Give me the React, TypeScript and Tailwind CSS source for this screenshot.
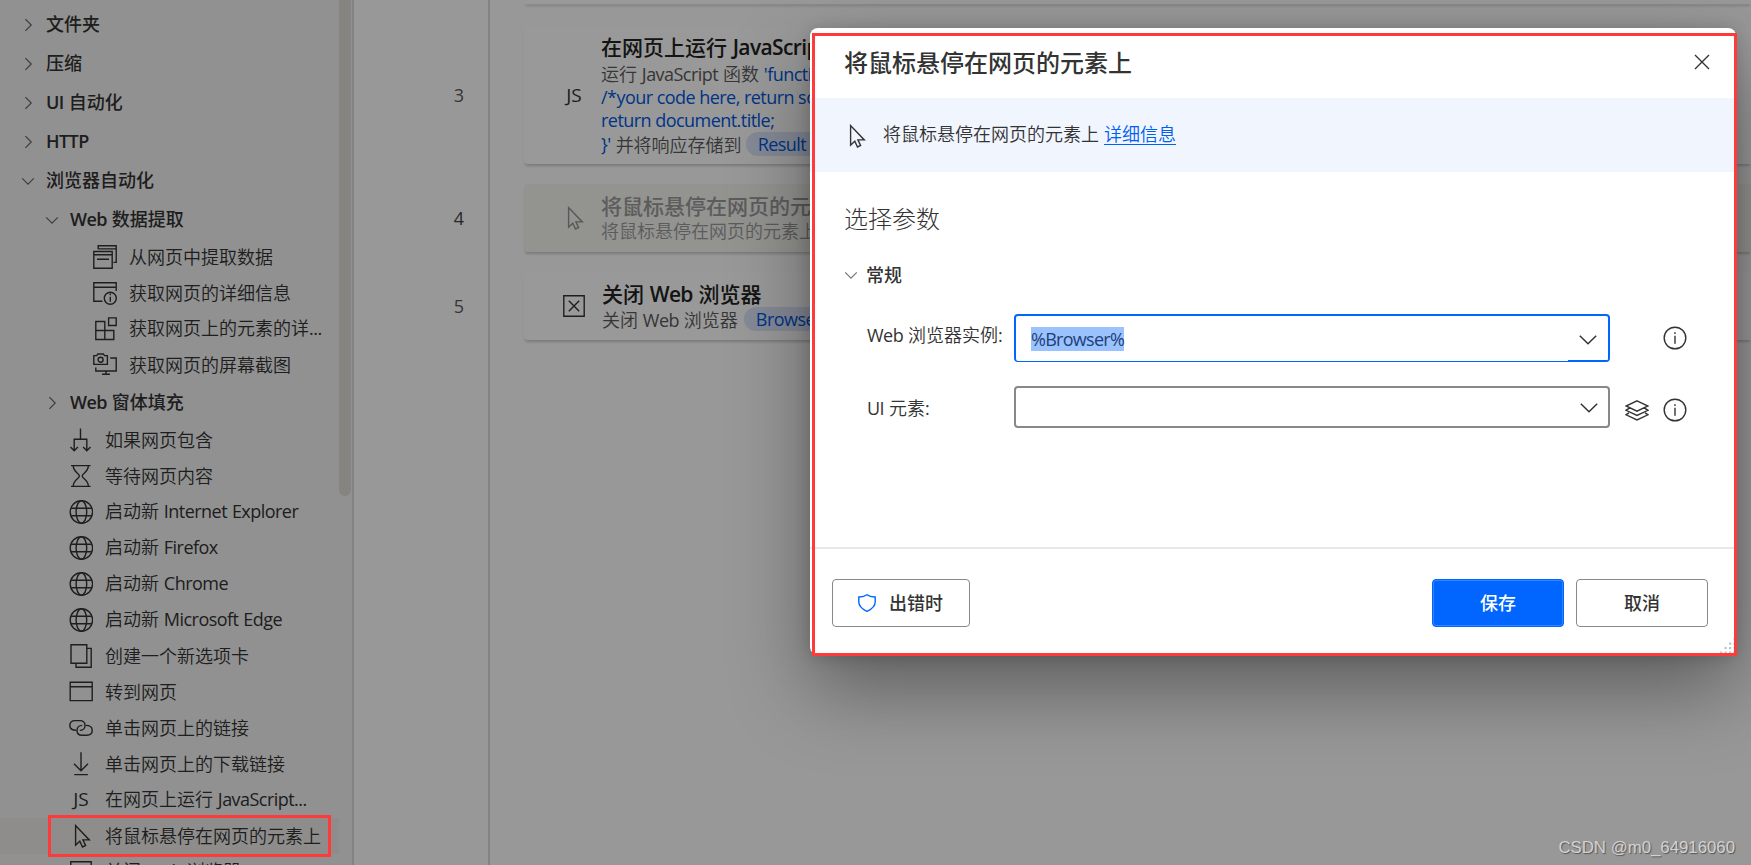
import type { ReactNode } from "react";

// ── Types ──────────────────────────────────────────────────────────────────

interface ActionItem {
    label: string;
    icon: ReactNode;
    selected?: boolean;
}

// ── Text ───────────────────────────────────────────────────────────────────

// Latin runs get their own face and spacing, the rest stays in the CJK face
function Mixed({ text }: { text: string }) {
    const parts = text.split(/([\x20-\x7e]+)/);
    return (
        <>
            {parts.map((part, i) =>
                i % 2 === 1 ? (
                    <span key={i} className="font-['Open_Sans'] font-normal tracking-[-0.03em] [word-spacing:0.04em]">
                        {part}
                    </span>
                ) : (
                    part
                ),
            )}
        </>
    );
}

// ── Icons ──────────────────────────────────────────────────────────────────

function Icon({ children, className = "size-6" }: { children: ReactNode; className?: string }) {
    return (
        <svg
            viewBox="0 0 24 24"
            className={`${className} shrink-0`}
            fill="none"
            stroke="currentColor"
            strokeWidth="1.4"
        >
            {children}
        </svg>
    );
}

function Chevron({ open, className = "text-[#666]" }: { open?: boolean; className?: string }) {
    return (
        <svg viewBox="0 0 14 14" className={`size-3.5 shrink-0 ${className}`} fill="none" stroke="currentColor" strokeWidth="1.2">
            <path d={open ? "M1.2 4.4 7 10.2l5.8-5.8" : "M4.4 1.2 10.2 7l-5.8 5.8"} />
        </svg>
    );
}

function CursorIcon({ className }: { className?: string }) {
    return (
        <Icon className={className}>
            <path d="M6.6 1.6v19.6l4.2-4 2.7 5.8 3.1-1.5-2.7-5.6h6.4z" />
        </Icon>
    );
}

const globe = (
    <Icon>
        <circle cx="12.4" cy="12" r="11.2" />
        <ellipse cx="12.4" cy="12" rx="5.3" ry="11.2" />
        <path d="M2 8.2h20.800M2 15.800h20.800" />
    </Icon>
);

function JsIcon() {
    return (
        <span className="w-6 shrink-0 text-center font-['Open_Sans'] text-[19px] font-normal tracking-[-0.1px]">
            JS
        </span>
    );
}

function CloseBox() {
    return (
        <Icon>
            <path d="M1.8 1.8h20.4v20.4H1.8zM6.8 6.8l10.4 10.4M17.2 6.8 6.8 17.2" />
        </Icon>
    );
}

function Info() {
    return (
        <Icon>
            <circle cx="12" cy="12" r="10.8" />
            <path d="M12 9.8v8M12 6.2v1.8" />
        </Icon>
    );
}

// ── Data ───────────────────────────────────────────────────────────────────

const GROUPS = [
    { label: "文件夹" },
    { label: "压缩" },
    { label: "UI 自动化" },
    { label: "HTTP" },
    { label: "浏览器自动化", open: true },
];

const EXTRACT: ActionItem[] = [
    {
        label: "从网页中提取数据",
        icon: (
            <Icon>
                <path d="M.8 6.5h18.4v16.7H.8zM.8 9.7h18.4M4 14.2h12M5.2 4.2V.8h18v16.6h-2.8M5.2 3.9h18" />
            </Icon>
        ),
    },
    {
        label: "获取网页的详细信息",
        icon: (
            <Icon>
                <path d="M9.5 20.2H.8V1.8h22.4V10M.8 6.2h22.4M17.3 15.8v5M17.3 12.6v1.6" />
                <circle cx="17.3" cy="17.2" r="6" />
            </Icon>
        ),
    },
    {
        label: "获取网页上的元素的详...",
        icon: (
            <Icon>
                <path d="M2.8 4.5h9v18h-9zM2.8 13.5h18v9h-9M15.6.9h7.6v7.6h-7.6z" />
            </Icon>
        ),
    },
    {
        label: "获取网页的屏幕截图",
        icon: (
            <Icon>
                <path d="M.8 2.6h3l1-1.6h5.6l1 1.6h3v8.8H.8zM17.2 5h6v13H2.8v-3.4M13 18v3M9 21.2h8" />
                <circle cx="7.6" cy="6.8" r="2.5" />
            </Icon>
        ),
    },
];

const ACTIONS: ActionItem[] = [
    {
        label: "如果网页包含",
        icon: (
            <Icon>
                <path d="M11.5.5v10.8M5.2 23V11.3h12.6V23M1.5 19l3.7 3.8L8.9 19M14.1 19l3.7 3.8 3.7-3.8" />
            </Icon>
        ),
    },
    {
        label: "等待网页内容",
        icon: (
            <Icon>
                <path d="M2 1.6h19.6M2 22.4h19.6M4.2 1.6c0 6.5 6.2 7.8 6.2 10.4s-6.2 3.900-6.200 10.400M19.400 1.600c0 6.500-6.200 7.800-6.200 10.400s6.200 3.900 6.200 10.400" />
            </Icon>
        ),
    },
    { label: "启动新 Internet Explorer", icon: globe },
    { label: "启动新 Firefox", icon: globe },
    { label: "启动新 Chrome", icon: globe },
    { label: "启动新 Microsoft Edge", icon: globe },
    {
        label: "创建一个新选项卡",
        icon: (
            <Icon>
                <path d="M2 .8h15.8v18.4H2zM17.8 4.4h4.4v18.8H7v-4" />
            </Icon>
        ),
    },
    {
        label: "转到网页",
        icon: (
            <Icon>
                <path d="M1.2 2.2h22v18.4h-22zM1.2 6.8h22" />
            </Icon>
        ),
    },
    {
        label: "单击网页上的链接",
        icon: (
            <Icon>
                <path d="M7.4 14.4C3.6 14.4.8 12.8.8 9.6c0-3 2.2-5 5.4-5h4.6c3.2 0 5.2 2 5.2 4.8 0 3-2.2 5-5.2 5" />
                <path d="M16.6 9.4c3.8 0 6.6 1.6 6.6 4.8 0 3-2.2 5-5.4 5h-4.6C10 19.2 8 17.2 8 14.4c0-3 2.2-5 5.2-5" />
            </Icon>
        ),
    },
    {
        label: "单击网页上的下载链接",
        icon: (
            <Icon>
                <path d="M12 .2v18M5 11.8l7 7 7-7M5.3 22.6h13.6" />
            </Icon>
        ),
    },
    { label: "在网页上运行 JavaScript...", icon: <JsIcon /> },
    { label: "将鼠标悬停在网页的元素上", icon: <CursorIcon className="size-6" />, selected: true },
    { label: "关闭 Web 浏览器", icon: <CloseBox /> },
];

// ── Sidebar ────────────────────────────────────────────────────────────────

function ActionRow({ item, nested }: { item: ActionItem; nested?: boolean }) {
    return (
        <li
            className={`flex h-9 items-center gap-3 whitespace-nowrap ${nested ? "pl-[93px]" : "pl-[69px]"} ${
                item.selected ? "bg-[#edebe9]" : ""
            }`}
        >
            {item.icon}
            <span className="mb-[3px]">
                <Mixed text={item.label} />
            </span>
        </li>
    );
}

function GroupRow({ label, open, nested }: { label: string; open?: boolean; nested?: boolean }) {
    return (
        <div className={`flex h-[39px] items-center gap-[11px] font-medium ${nested ? "pl-[45px]" : "pl-[21px]"}`}>
            <Chevron open={open} />
            <span className="mb-[3px] [&>span]:font-semibold">
                <Mixed text={label} />
            </span>
        </div>
    );
}

function Sidebar() {
    return (
        <aside className="flex w-[354px] shrink-0 border-r-2 border-[#dadada] bg-[#f2f2f2]">
            <div className="w-[339px] shrink-0 pt-[5px] font-[350]">
                {GROUPS.map((g) => (
                    <GroupRow key={g.label} {...g} />
                ))}
                <GroupRow label="Web 数据提取" open nested />
                <ul>
                    {EXTRACT.map((item) => (
                        <ActionRow key={item.label} item={item} nested />
                    ))}
                </ul>
                <GroupRow label="Web 窗体填充" nested />
                <ul>
                    {ACTIONS.map((item) => (
                        <ActionRow key={item.label} item={item} />
                    ))}
                </ul>
            </div>
            <div className="h-[496px] w-3 rounded-b-full bg-[#dfdcd8]" />
        </aside>
    );
}

// ── Flow canvas ────────────────────────────────────────────────────────────

function Card({ icon, className, children }: { icon?: ReactNode; className: string; children?: ReactNode }) {
    return (
        <div className={`flex items-center overflow-hidden rounded-l pl-[38px] shadow-[0_3px_3px_-1px_rgba(0,0,0,0.2)] ${className}`}>
            {icon}
            <div className="ml-[15px] whitespace-nowrap pb-0.5 font-[350] text-[#5a5a5a]">{children}</div>
        </div>
    );
}

function Variable({ name }: { name: string }) {
    return (
        <span className="inline-block h-6 rounded-full bg-[#dce7fa] px-3 font-['Open_Sans'] font-normal leading-6 tracking-[-0.03em] text-[#0058e0]">
            {name}
        </span>
    );
}

function Flow() {
    return (
        <main className="flex grow bg-[#fefefe]">
            <div className="w-[136px] shrink-0 border-r-2 border-[#dadada] pl-24 text-center font-['Open_Sans'] text-lg text-[#5a5a5a]">
                <div className="mt-[27px] flex h-[136px] items-center justify-center pr-5">3</div>
                <div className="mt-[21px] flex h-[68px] items-center justify-center pr-5 text-[#444]">4</div>
                <div className="mt-5 flex h-[68px] items-center justify-center pr-5">5</div>
            </div>
            <div className="grow pl-[34px]">
                <Card className="h-1 bg-white" />
                <Card className="mt-[23px] h-[137px] bg-white" icon={<JsIcon />}>
                    <div className="text-[21px] font-medium leading-[27px] text-[#222] [&>span]:font-semibold">
                        <Mixed text="在网页上运行 JavaScript 函数" />
                    </div>
                    <div className="leading-6">
                        <Mixed text="运行 JavaScript 函数 " />
                        <span className="font-['Open_Sans'] font-normal tracking-[-0.03em] text-[#0058e0]">'function ExecuteScript()</span>
                    </div>
                    <div className="font-['Open_Sans'] font-normal leading-[23px] tracking-[-0.03em] text-[#0058e0]">
                        <div>{"/*your code here, return something */"}</div>
                        <div>return document.title;</div>
                    </div>
                    <div className="flex h-6 items-center leading-6">
                        <span className="mr-[5px] font-['Open_Sans'] font-normal tracking-[-0.03em] text-[#0058e0]">{"}'"}</span>
                        <span className="mr-1">并将响应存储到</span>
                        <Variable name="Result" />
                    </div>
                </Card>
                <Card className="mt-5 h-[68px] bg-[#f5f5f1]" icon={<CursorIcon className="size-6 opacity-50" />}>
                    <div className="text-[21px] font-medium leading-[26px] text-[#999]">将鼠标悬停在网页的元素上</div>
                    <div className="leading-6 text-[#999]">将鼠标悬停在网页的元素上</div>
                </Card>
                <Card className="mt-5 h-[68px] bg-white" icon={<CloseBox />}>
                    <div className="mt-px pl-px text-[21px] font-medium leading-[26px] text-[#222] [&>span]:font-semibold">
                        <Mixed text="关闭 Web 浏览器" />
                    </div>
                    <div className="flex h-[25px] items-center pl-px leading-6">
                        <span className="mr-1.5">
                            <Mixed text="关闭 Web 浏览器" />
                        </span>
                        <Variable name="Browser" />
                    </div>
                </Card>
            </div>
        </main>
    );
}

// ── Dialog ─────────────────────────────────────────────────────────────────

function DropArrow({ className = "" }: { className?: string }) {
    return (
        <svg viewBox="0 0 18 10" className={`h-2.5 w-[18px] ${className}`} fill="none" stroke="#333" strokeWidth="1.5">
            <path d="m.8.8 8.2 8 8.2-8" />
        </svg>
    );
}

// Resize grip: a triangle of dots in the lower right corner
function Grip() {
    const dots = [0, 1, 2, 3].flatMap((row) =>
        Array.from({ length: row + 1 }, (_, i) => [3 - i, row]),
    );
    return (
        <svg viewBox="0 0 18 18" className="absolute right-0 bottom-0 size-[18px]" fill="#bcc3d0">
            {dots.map(([x, y]) => (
                <rect key={`${x}-${y}`} x={2 + x * 4.5} y={1 + y * 4.5} width="2.2" height="2.2" />
            ))}
        </svg>
    );
}

function Dialog() {
    return (
        <section className="absolute top-7 left-[810px] h-[627px] w-[926px] rounded-lg bg-white font-[350] text-[#333] shadow-[0_34px_80px_rgba(0,0,0,0.38),0_2px_16px_rgba(0,0,0,0.18)]">
            <header className="flex h-[70px] items-center justify-between pr-[26px] pl-[34px]">
                <h1 className="mb-0.5 text-2xl font-medium">将鼠标悬停在网页的元素上</h1>
                <svg viewBox="0 0 16 16" className="mb-[3px] size-4" fill="none" stroke="#333" strokeWidth="1.4">
                    <path d="m1 1 14 14M15 1 1 15" />
                </svg>
            </header>

            <div className="flex h-[74px] items-center bg-[#f1f5fe] pl-[34px]">
                <CursorIcon className="mt-0.5 size-6" />
                <p className="mb-1 ml-[15px]">
                    将鼠标悬停在网页的元素上
                    <a className="ml-[5px] text-[#0060f0] underline underline-offset-3">详细信息</a>
                </p>
            </div>

            <div className="h-[377px] border-b-2 border-[#e8e8e8] pl-[35px]">
                <h2 className="-ml-px pt-7 text-2xl font-light leading-9">选择参数</h2>
                <div className="mt-[26px] flex h-[26px] items-center gap-2 font-medium">
                    <Chevron open className="-ml-px text-[#777]" />
                    <span className="mb-0.5">常规</span>
                </div>

                <div className="mt-[26px] flex h-12 items-center pl-[22px]">
                    <div className="mb-[7px] w-[147px] whitespace-nowrap">
                        <Mixed text="Web 浏览器实例:" />
                    </div>
                    <div className="relative flex h-12 w-[596px] items-center justify-between rounded border-2 border-b border-[#0066ff] pr-[11px] pl-[15px]">
                        <span className="mt-px bg-[#99c2ff] font-['Open_Sans'] font-normal leading-6 tracking-[-0.04em] text-[#1f3f77]">
                            %Browser%
                        </span>
                        <DropArrow className="mt-0.5" />
                        <span className="absolute right-0 bottom-0 h-px w-10 bg-[#0066ff]" />
                    </div>
                    <div className="mb-px ml-[53px]">
                        <Info />
                    </div>
                </div>

                <div className="mt-6 flex h-[42px] items-center pl-[22px]">
                    <div className="w-[147px]">
                        <Mixed text="UI 元素:" />
                    </div>
                    <div className="flex h-[42px] w-[596px] items-center justify-end rounded border-2 border-[#888] pr-2.5">
                        <DropArrow className="mt-px" />
                    </div>
                    <div className="mt-1.5 ml-[15px] flex items-center gap-3.5">
                        <Icon>
                            <path d="m12 2.8 11 5.2-11 5.2L1 8zM4 10.4l-3 1.9 11 5.2 11-5.2-3-1.9M4 14.9l-3 1.9L12 22l11-5.2-3-1.9" />
                        </Icon>
                        <Info />
                    </div>
                </div>
            </div>

            <footer className="flex items-center pt-[30px] pr-7 pl-[22px] font-medium">
                <button className="flex h-12 w-[138px] items-center rounded border border-[#888] pl-[25px]">
                    <svg viewBox="0 0 18 18" className="size-[18px]" fill="none" stroke="#0066ff" strokeWidth="1.4">
                        <path d="M9 .8c2.2 1.7 4.8 2.3 8.2 2.2v5c0 4.7-3.6 7.2-8.2 9.4C4.4 15.2.8 12.7.8 8V3C4.2 3.1 6.8 2.5 9 .8z" />
                    </svg>
                    <span className="mb-0.5 ml-[13px]">出错时</span>
                </button>
                <button className="ml-auto h-12 w-[132px] rounded border border-[#0066ff] bg-[#0066ff] pb-0.5 text-white shadow-[inset_0_0_0_1px_#3384ff]">
                    保存
                </button>
                <button className="ml-3 h-12 w-[132px] rounded border border-[#888] pb-0.5">取消</button>
            </footer>
            <Grip />
        </section>
    );
}

// ── Page ───────────────────────────────────────────────────────────────────

export default function App() {
    return (
        <div className="relative h-[865px] w-[1751px] overflow-hidden bg-white font-['Noto_Sans_CJK_SC',sans-serif] text-lg text-[#333]">
            <div className="flex h-full overflow-hidden">
                <Sidebar />
                <Flow />
            </div>
            <div className="absolute inset-0 bg-black/40" />
            <Dialog />

            {/* Highlight frames */}
            <div className="absolute top-[33px] left-[812px] h-[623px] w-[925px] border-3 border-[#ff3a3a]" />
            <div className="absolute top-[815px] left-12 h-[42px] w-[283px] border-3 border-[#ff3a3a]" />

            <p className="absolute right-4 bottom-[5px] font-['Liberation_Sans'] text-[16.8px] leading-6 text-[#d2d2d2] [text-shadow:1px_1px_1px_#555]">
                CSDN @m0_64916060
            </p>
        </div>
    );
}
